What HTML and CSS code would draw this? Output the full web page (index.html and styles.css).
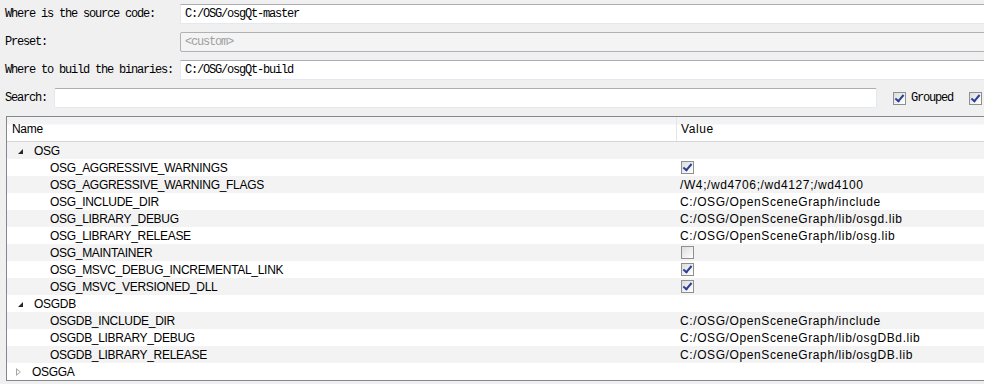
FILE: index.html
```html
<!DOCTYPE html>
<html lang="en">
<head>
    <meta charset="UTF-8">
    <title>CMake</title>
    <link rel="stylesheet" href="styles.css">
</head>
<body>
    <div class="form">
        <div class="form-row">
            <label class="form-label">Where is the source code:</label>
            <div class="field">C:/OSG/osgQt-master</div>
        </div>
        <div class="form-row">
            <label class="form-label">Preset:</label>
            <div class="field field-disabled">&lt;custom&gt;</div>
        </div>
        <div class="form-row">
            <label class="form-label">Where to build the binaries:</label>
            <div class="field">C:/OSG/osgQt-build</div>
        </div>
        <div class="form-row search-row">
            <label class="search-label">Search:</label>
            <div class="field search-field"></div>
            <span class="check-label"><span class="check"></span>Grouped</span>
            <span class="check-label"><span class="check"></span>Advanced</span>
        </div>
    </div>

    <div class="tree">
        <div class="tree-header">
            <div class="col-name">Name</div>
            <div class="col-value">Value</div>
        </div>
        <div class="tree-body" id="tree"></div>
    </div>

    <script>
        const rows = [
            { group: 'OSG', open: true },
            { name: 'OSG_AGGRESSIVE_WARNINGS', check: true },
            { name: 'OSG_AGGRESSIVE_WARNING_FLAGS', value: '/W4;/wd4706;/wd4127;/wd4100' },
            { name: 'OSG_INCLUDE_DIR', value: 'C:/OSG/OpenSceneGraph/include' },
            { name: 'OSG_LIBRARY_DEBUG', value: 'C:/OSG/OpenSceneGraph/lib/osgd.lib' },
            { name: 'OSG_LIBRARY_RELEASE', value: 'C:/OSG/OpenSceneGraph/lib/osg.lib' },
            { name: 'OSG_MAINTAINER', check: false },
            { name: 'OSG_MSVC_DEBUG_INCREMENTAL_LINK', check: true },
            { name: 'OSG_MSVC_VERSIONED_DLL', check: true },
            { group: 'OSGDB', open: true },
            { name: 'OSGDB_INCLUDE_DIR', value: 'C:/OSG/OpenSceneGraph/include' },
            { name: 'OSGDB_LIBRARY_DEBUG', value: 'C:/OSG/OpenSceneGraph/lib/osgDBd.lib' },
            { name: 'OSGDB_LIBRARY_RELEASE', value: 'C:/OSG/OpenSceneGraph/lib/osgDB.lib' },
            { group: 'OSGGA', open: false }
        ];

        let html = '';
        rows.forEach(function (r) {
            if (r.group) {
                html += `<div class="tree-row">
                    <div class="col-name group"><span class="arrow ${r.open ? 'open' : 'closed'}"></span>${r.group}</div>
                    <div class="col-value"></div>
                </div>`;
            } else {
                let v = r.value || '';
                if (r.check !== undefined) {
                    v = `<span class="check ${r.check ? '' : 'off'}"></span>`;
                }
                html += `<div class="tree-row">
                    <div class="col-name item">${r.name}</div>
                    <div class="col-value">${v}</div>
                </div>`;
            }
        });
        document.getElementById('tree').innerHTML = html;
    </script>
</body>
</html>
```

FILE: styles.css
```css
body {
    margin: 0;
    background-color: #f0f0f0;
    color: #000000;
    overflow: hidden;
    width: 984px;
    height: 384px;
}
.form {
    padding: 4px 0 0 5px;
    display: flex;
    flex-direction: column;
    gap: 8px;
    font-family: 'Liberation Mono', monospace;
    font-size: 12px;
    letter-spacing: -1.2px;
}
.form-row {
    display: flex;
    align-items: center;
    height: 20px;
}
.form-label {
    width: 175px;
    flex: none;
}
.field {
    flex: none;
    width: 830px;
    height: 18px;
    line-height: 18px;
    background-color: #ffffff;
    border: 1px solid #e3e9ef;
    border-top-color: #abadb3;
    padding-left: 4px;
    box-sizing: content-box;
}
.field-disabled {
    background-color: #f4f4f4;
    border-color: #adb2b5;
    color: #a0a0a0;
    border-radius: 2px;
}
.search-label {
    width: 49px;
    flex: none;
}
.search-field {
    width: 817px;
    border-radius: 2px;
}
.check-label {
    display: flex;
    align-items: center;
    margin-left: 16px;
    white-space: nowrap;
}
.check-label .check {
    margin-right: 5px;
}
.check {
    display: inline-block;
    width: 11px;
    height: 11px;
    border: 1px solid #8e8f8f;
    background: linear-gradient(135deg, #dcdcdc, #ffffff);
    position: relative;
    flex: none;
}
.check::after {
    content: '';
    position: absolute;
    left: 3px;
    top: 0px;
    width: 3px;
    height: 7px;
    border: solid #2b3f94;
    border-width: 0 2px 2px 0;
    transform: rotate(40deg);
}
.check.off::after {
    display: none;
}
.tree {
    margin: 8px 0 0 6px;
    width: 990px;
    height: 265px;
    border: 1px solid #828790;
    border-right: none;
    background-color: #ffffff;
    font-family: 'Liberation Sans', sans-serif;
    font-size: 12px;
    overflow: hidden;
    box-sizing: border-box;
}
.tree-header {
    display: flex;
    height: 25px;
    background: linear-gradient(#f3f3f3 0, #f3f3f3 7px, #ffffff 8px, #ffffff 100%);
    border-bottom: 1px solid #d5d5d5;
    box-sizing: border-box;
    align-items: stretch;
}
.tree-header .col-name,
.tree-header .col-value {
    display: flex;
    align-items: flex-end;
    line-height: 15px;
    padding-bottom: 4px;
    box-sizing: border-box;
}
.tree-header .col-name {
    padding-left: 5px;
    border-right: 1px solid #e5e5e5;
}
.tree-header .col-value {
    padding-left: 4px;
}
.col-name {
    width: 670px;
    flex: none;
    box-sizing: border-box;
    white-space: nowrap;
    letter-spacing: -0.3px;
}
.col-value {
    flex: 1;
    padding-left: 3px;
    white-space: nowrap;
    letter-spacing: 0.6px;
}
.tree-row {
    display: flex;
    height: 17px;
    line-height: 16px;
    padding-top: 1px;
    box-sizing: border-box;
    align-items: center;
}
.tree-row:nth-child(odd) {
    background-color: #f3f3f3;
}
.group {
    display: flex;
    align-items: center;
    padding-left: 9px;
}
.item {
    padding-left: 43px;
}
.tree-row .check {
    vertical-align: middle;
    margin-left: 1px;
    margin-top: -3px;
}
.arrow {
    display: inline-block;
    position: relative;
}
.arrow.open {
    border-right: 5px solid #262626;
    border-top: 5px solid transparent;
    width: 0;
    height: 0;
    margin-left: 2px;
    margin-right: 11px;
}
.arrow.closed {
    width: 0;
    height: 0;
    border-left: 5px solid #a6a6a6;
    border-top: 4px solid transparent;
    border-bottom: 4px solid transparent;
    margin-right: 11px;
}
.arrow.closed::after {
    content: '';
    position: absolute;
    left: -4px;
    top: -2px;
    border-left: 3px solid #ffffff;
    border-top: 2px solid transparent;
    border-bottom: 2px solid transparent;
}
```
